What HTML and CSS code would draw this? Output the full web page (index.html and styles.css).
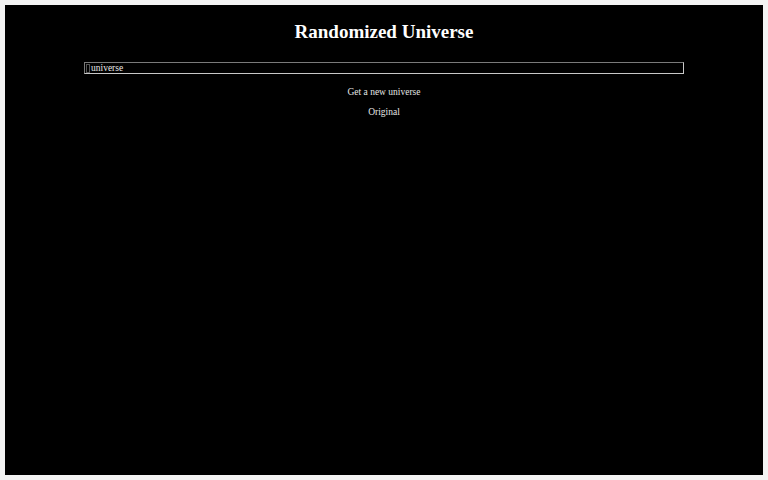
FILE: index.html
```html
<!DOCTYPE html>
<html>
<head>
<meta charset="utf-8">
<title>Randomized Universe</title>
<link rel="stylesheet" href="styles.css">
</head>
<body>
<main class="page">
  <h1 class="title">Randomized Universe</h1>
  <div class="field"><span class="tofu"></span>universe</div>
  <div class="links">
    <span class="link">Get a new universe</span>
    <span class="link">Original</span>
  </div>
</main>
</body>
</html>
```

FILE: styles.css
```css
html {
  background: #f4f4f4;
}
body {
  margin: 5px;
  background: #000;
  min-height: calc(100vh - 10px);
  font-family: "Liberation Serif", "Times New Roman", serif;
  color: #fff;
}
.page {
  display: flex;
  flex-direction: column;
  align-items: center;
  padding-top: 15px;
}
.title {
  margin: 0;
  font-size: 19px;
  line-height: 23px;
  font-weight: bold;
  color: #fff;
}
.field {
  margin-top: 19px;
  width: 600px;
  height: 12px;
  box-sizing: border-box;
  border: 1px solid;
  border-color: #7a7a7a #c8c8c8 #c8c8c8 #7a7a7a;
  font-size: 9.5px;
  line-height: 10px;
  color: #e8e8e8;
  display: flex;
  align-items: center;
  padding-left: 1px;
}
.tofu {
  display: inline-block;
  width: 2px;
  height: 7px;
  border: 1px solid #555;
  margin-right: 1px;
}
.links {
  margin-top: 12px;
  display: flex;
  flex-direction: column;
  align-items: center;
  gap: 8px;
}
.link {
  font-size: 9.5px;
  line-height: 12px;
  color: #e6e6e6;
}
```
